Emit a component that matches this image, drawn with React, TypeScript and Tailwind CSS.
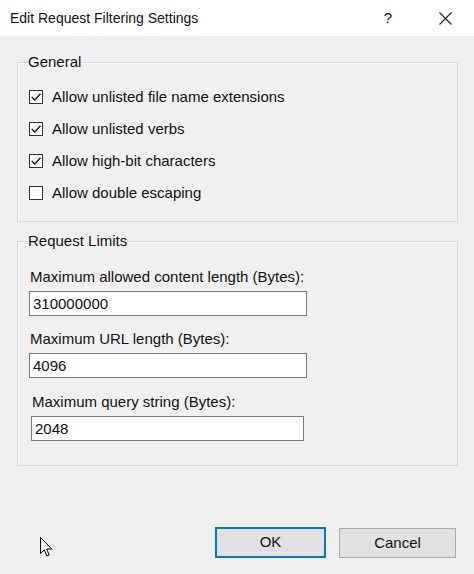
import React from "react";

const font = { fontFamily: '"Liberation Sans", Arial, sans-serif' };

function Check({ checked, label }: { checked: boolean; label: string }) {
  return (
    <label className="flex h-[32px] items-center gap-[9px]">
      <span className="flex h-[14px] w-[14px] items-center justify-center border border-[#333] bg-white">
        {checked && (
          <svg width="12" height="12" viewBox="0 0 12 12">
            <path d="M1.8 6 L4.7 9 L10.4 2.8" fill="none" stroke="#222" strokeWidth="1.5" />
          </svg>
        )}
      </span>
      <span>{label}</span>
    </label>
  );
}

function Field({ label, value, className = "" }: { label: string; value: string; className?: string }) {
  return (
    <div className={className}>
      <div className="ml-px leading-[18px]">{label}</div>
      <input
        readOnly
        value={value}
        className="mt-[5px] h-[25px] w-[278px] border border-[#7a7a7a] bg-white px-[3px] text-[15px] outline-none"
      />
    </div>
  );
}

export default function App() {
  return (
    <div className="relative flex h-[574px] w-[474px] flex-col bg-[#f0f0f0] text-[15px] text-[#111]" style={font}>
      <div className="flex h-[36px] items-center bg-white pl-[10px] pr-[22px] text-[14px]">
        <span className="flex-1">Edit Request Filtering Settings</span>
        <span className="mr-[47px] text-[15px]">?</span>
        <svg width="13" height="13" viewBox="0 0 13 13">
          <path d="M0.5 0.5 L12.5 12.5 M12.5 0.5 L0.5 12.5" stroke="#222" strokeWidth="1.1" />
        </svg>
      </div>

      <fieldset className="ml-[17px] mr-[16px] mt-[17px] border border-[#d9d9d9] px-[11px] pb-[12px] pt-[10px] shadow-[inset_1px_1px_0_#fafafa]">
        <legend className="-ml-px leading-[18px]">General</legend>
        <Check checked label="Allow unlisted file name extensions" />
        <Check checked label="Allow unlisted verbs" />
        <Check checked label="Allow high-bit characters" />
        <Check checked={false} label="Allow double escaping" />
      </fieldset>

      <fieldset className="ml-[17px] mr-[16px] mt-[10px] border border-[#d9d9d9] px-[11px] pb-[24px] pt-[18px] shadow-[inset_1px_1px_0_#fafafa]">
        <legend className="-ml-px leading-[18px]">Request Limits</legend>
        <Field label="Maximum allowed content length (Bytes):" value="310000000" />
        <Field className="mt-[14px]" label="Maximum URL length (Bytes):" value="4096" />
        <div className="mt-[15px] ml-[2px]">
          <div className="ml-px leading-[18px]">Maximum query string (Bytes):</div>
          <input
            readOnly
            value="2048"
            className="mt-[5px] h-[25px] w-[273px] border border-[#7a7a7a] bg-white px-[3px] text-[15px] outline-none"
          />
        </div>
      </fieldset>

      <div className="mt-[61px] flex items-start justify-end gap-[13px] pr-[18px]">
        <button className="h-[31px] w-[111px] border-2 border-[#0078d7] bg-[#e1e1e1]">OK</button>
        <button className="mt-px h-[30px] w-[117px] border border-[#adadad] bg-[#e1e1e1]">Cancel</button>
      </div>

      <svg className="absolute left-[40px] top-[537px]" width="13" height="21" viewBox="0 0 13 21">
        <path
          d="M0.5 0.5 L0.5 16.5 L4.3 12.8 L6.8 19 L9.2 18 L6.7 12 L11.8 12 Z"
          fill="#fff"
          stroke="#000"
          strokeWidth="1"
          strokeLinejoin="round"
        />
      </svg>
    </div>
  );
}
